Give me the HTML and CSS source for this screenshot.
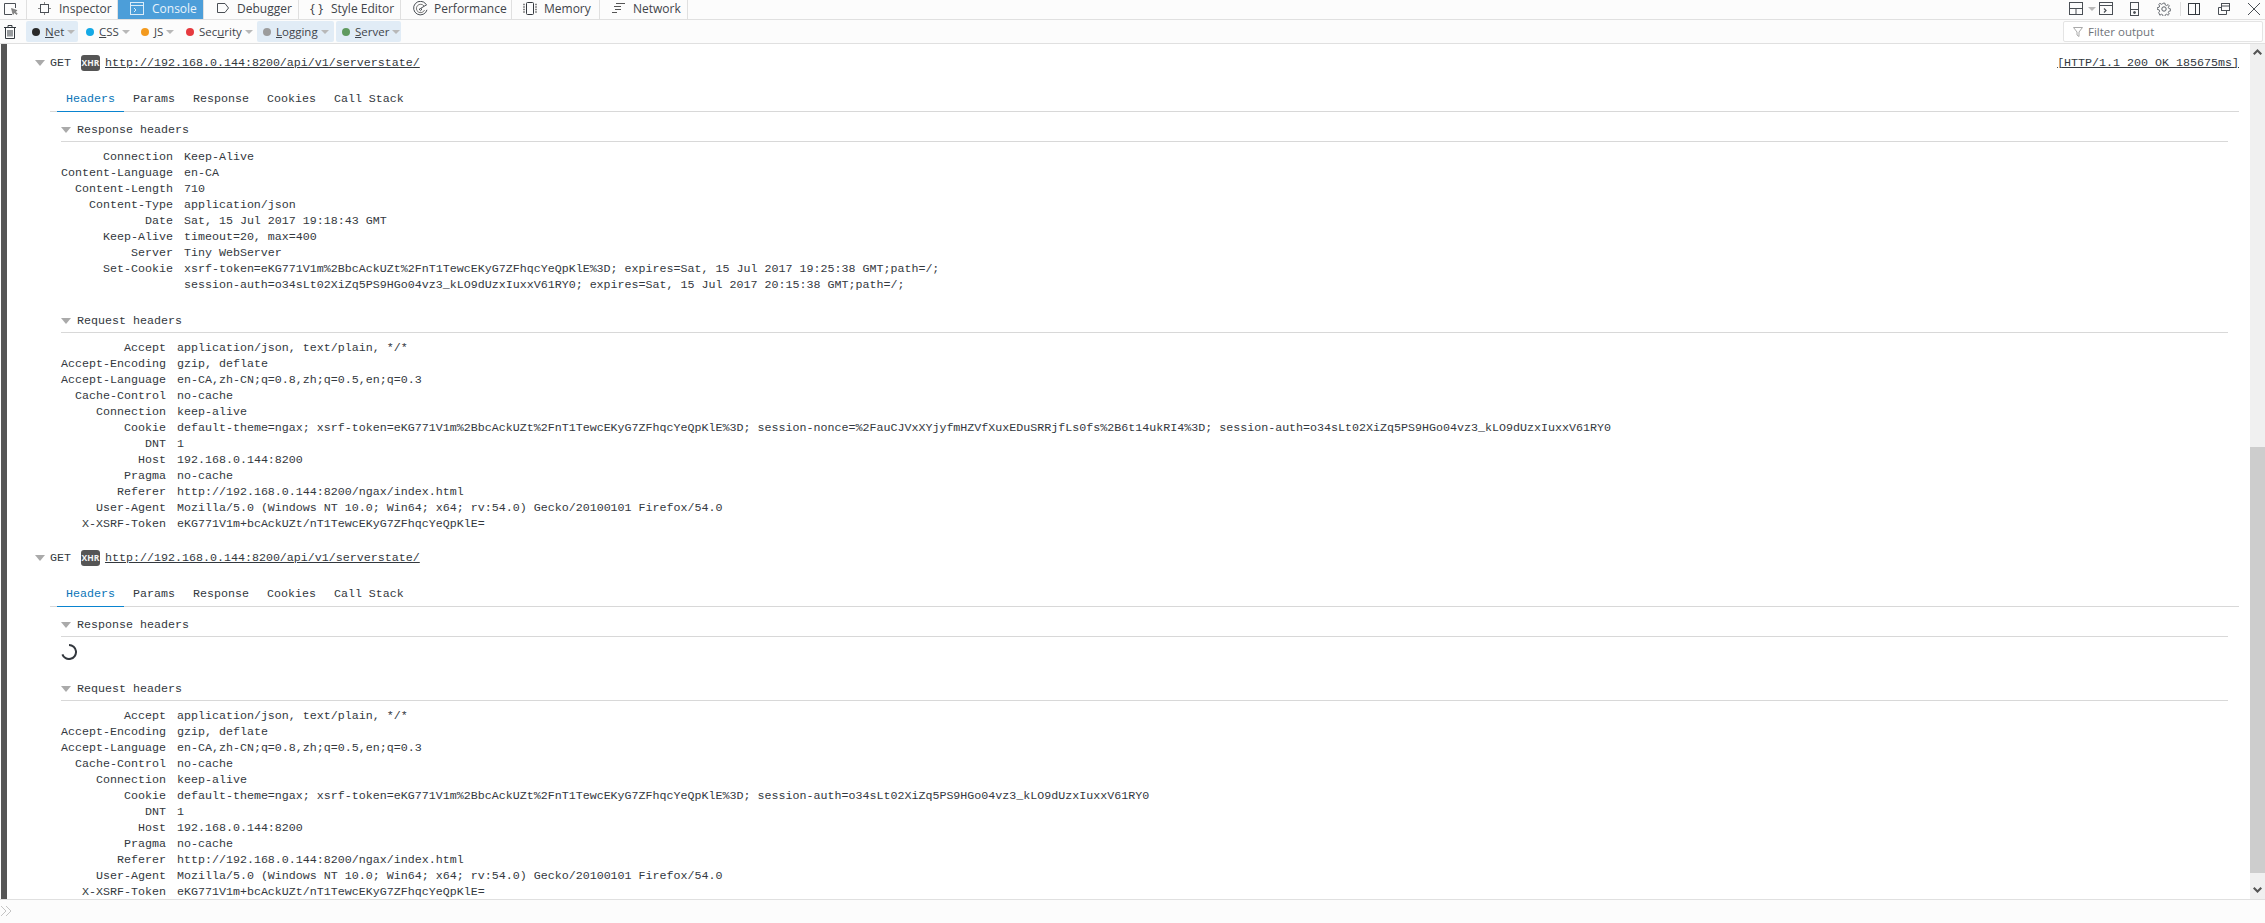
FILE: index.html
```html
<!DOCTYPE html>
<html lang="en">
<head>
<meta charset="utf-8">
<title>Web Console</title>
<link rel="stylesheet" href="styles.css">
</head>
<body>
<div class="devtools">
  <nav class="tabbar">
    <div class="picker">
      <svg width="16" height="14" viewBox="0 0 16 14" fill="none" stroke="#4a4f55"><path d="M9 12.5H1.5v-11h11V6"/><path d="M8.5 6.5l1.6 6 1.2-2 2.2 2 .8-.8-2.2-2 2-1.2z" fill="#888" stroke="#666" stroke-width=".6"/></svg>
    </div>
    <div class="tab t-inspector"><svg width="13" height="13" viewBox="0 0 13 13" fill="none" stroke="#4a4f55"><rect x="2.5" y="2.5" width="8" height="8"/><path d="M6.5 0v2M6.5 11v2M0 6.5h2M11 6.5h2" stroke="#888"/></svg><span>Inspector</span></div>
    <div class="tab t-console active"><svg width="14" height="13" viewBox="0 0 14 13" fill="none" stroke="#fff" stroke-opacity=".8"><rect x=".5" y=".5" width="13" height="12"/><path d="M1 3.5h12M4 6l2 2-2 2"/></svg><span>Console</span></div>
    <div class="tab t-debugger"><svg width="14" height="12" viewBox="0 0 14 12" fill="none" stroke="#4a4f55"><path d="M1.5 1.5h7.5l3.5 4.5-3.5 4.5H1.5z" stroke-linejoin="round"/></svg><span>Debugger</span></div>
    <div class="tab t-style"><span class="braces">{ }</span><span>Style Editor</span></div>
    <div class="tab t-perf"><svg width="15" height="15" viewBox="0 0 15 15" fill="none" stroke="#4a4f55"><path d="M13 3.2A6.8 6.8 0 1 0 14 8.800"/><path d="M11 5A4.200 4.200 0 1 0 11.500 9" stroke="#777"/><path d="M7.500 7.500L14 3.500M7.500 7.500a1 1 0 1 0 .1 0"/></svg><span>Performance</span></div>
    <div class="tab t-memory"><svg width="16" height="13" viewBox="0 0 16 13" fill="none" stroke="#33383e"><rect x="4.500" y=".5" width="7" height="12" rx="1"/><path d="M1 2.500h2M1 5h2M1 7.500h2M1 10h2M13 2.500h2M13 5h2M13 7.500h2M13 10h2" stroke="#888" stroke-width="1.500"/></svg><span>Memory</span></div>
    <div class="tab t-network"><svg width="13" height="12" viewBox="0 0 13 12" fill="none" stroke="#555"><path d="M4 1.500h9M2 4.500h7M3 7.500h6M0 10.500h5"/></svg><span>Network</span></div>
    <div class="tools">
      <span class="tool layout"><svg width="14" height="13" viewBox="0 0 14 13" fill="none" stroke="#4a4f55"><rect x=".5" y=".5" width="13" height="12"/><path d="M.5 6.500h13M7 6.500v6"/></svg><i class="caret"></i></span>
      <span class="tool t-a"><svg width="14" height="13" viewBox="0 0 14 13" fill="none" stroke="#4a4f55"><rect x=".5" y=".5" width="13" height="12"/><path d="M1 3.500h12M5 6.500l2 2-2 2" stroke-width="1.200"/></svg></span>
      <span class="tool t-b"><svg width="9" height="14" viewBox="0 0 9 14" fill="none" stroke="#4a4f55"><rect x=".5" y=".5" width="8" height="13"/><path d="M.5 7.500h8"/><circle cx="4.500" cy="10.500" r="1" fill="#4a4f55"/></svg></span>
      <span class="tool t-c"><svg width="14" height="14" viewBox="0 0 14 14" fill="none" stroke="#5a5f65"><circle cx="7" cy="7" r="2.200"/><path d="M6 .5h2l.4 2 1.500.7 1.700-1.100 1.300 1.400-1.100 1.600.7 1.500 2 .4v2l-2 .4-.7 1.500 1.100 1.700-1.400 1.300-1.600-1.100-1.500.7-.4 2H6l-.4-2-1.500-.7-1.700 1.100L1.100 11l1.100-1.600-.7-1.500-2-.4v-2l2-.4.7-1.500L1.100 2l1.400-1.300 1.600 1.100 1.500-.7z" transform="translate(.7 .7) scale(.9)"/></svg></span>
      <span class="tool-sep"></span>
      <span class="tool t-d"><svg width="12" height="12" viewBox="0 0 12 12" fill="none" stroke="#33383e"><rect x=".5" y=".5" width="11" height="11"/><path d="M7.500 .5v11"/></svg></span>
      <span class="tool t-e"><svg width="12" height="12" viewBox="0 0 12 12" fill="none" stroke="#4a4f55"><rect x="3.500" y=".5" width="8" height="7"/><path d="M3.500 3h8"/><path d="M3.500 4.500H.5v7h8V7.500" /></svg></span>
      <span class="tool t-f"><svg width="14" height="14" viewBox="0 0 14 14" fill="none" stroke="#4a4f55"><path d="M1 1l12 12M13 1L1 13"/></svg></span>
    </div>
  </nav>

  <div class="filterbar">
    <span class="trash"><svg width="12" height="14" viewBox="0 0 12 14" fill="none" stroke="#33383e"><path d="M0 2.500h12M4 2.500V.5h4v2"/><path d="M1.500 2.500v11h9v-11M4 5v6.500M6 5v6.500M8 5v6.500"/></svg></span>
    <span class="cat b-net on"><i class="dot d-net"></i><u>N</u>et<i class="caret"></i></span>
    <span class="cat b-css"><i class="dot d-css"></i><u>C</u>SS<i class="caret"></i></span>
    <span class="cat b-js"><i class="dot d-js"></i><u>J</u>S<i class="caret"></i></span>
    <span class="cat b-sec"><i class="dot d-sec"></i>Sec<u>u</u>rity<i class="caret"></i></span>
    <span class="cat b-log on"><i class="dot d-log"></i><u>L</u>ogging<i class="caret"></i></span>
    <span class="cat b-srv on"><i class="dot d-srv"></i><u>S</u>erver<i class="caret"></i></span>
    <label class="filter"><svg width="10" height="10" viewBox="0 0 10 10" fill="#fff" stroke="#aaa"><path d="M.5 .5h9L6 5v4.500L4 8V5z"/></svg><span>Filter output</span></label>
  </div>

  <div class="body">
    <main class="output">
      <article class="msg">
        <header class="msg-head">
          <i class="twisty"></i><span class="method">GET</span><span class="xhr">XHR</span><a class="url">http://192.168.0.144:8200/api/v1/serverstate/</a><a class="status">[HTTP/1.1 200 OK 185675ms]</a>
        </header>
        <ul class="net-tabs"><li class="sel">Headers</li><li>Params</li><li>Response</li><li>Cookies</li><li>Call Stack</li></ul>
        <h3 class="sec first"><i class="twisty small"></i>Response headers</h3>
        <dl class="hdrs">
          <dt>Connection</dt><dd>Keep-Alive</dd>
          <dt>Content-Language</dt><dd>en-CA</dd>
          <dt>Content-Length</dt><dd>710</dd>
          <dt>Content-Type</dt><dd>application/json</dd>
          <dt>Date</dt><dd>Sat, 15 Jul 2017 19:18:43 GMT</dd>
          <dt>Keep-Alive</dt><dd>timeout=20, max=400</dd>
          <dt>Server</dt><dd>Tiny WebServer</dd>
          <dt>Set-Cookie</dt><dd>xsrf-token=eKG771V1m%2BbcAckUZt%2FnT1TewcEKyG7ZFhqcYeQpKlE%3D; expires=Sat, 15 Jul 2017 19:25:38 GMT;path=/;<br>session-auth=o34sLt02XiZq5PS9HGo04vz3_kLO9dUzxIuxxV61RY0; expires=Sat, 15 Jul 2017 20:15:38 GMT;path=/;</dd>
        </dl>
        <h3 class="sec"><i class="twisty small"></i>Request headers</h3>
        <dl class="hdrs">
          <dt>Accept</dt><dd>application/json, text/plain, */*</dd>
          <dt>Accept-Encoding</dt><dd>gzip, deflate</dd>
          <dt>Accept-Language</dt><dd>en-CA,zh-CN;q=0.8,zh;q=0.5,en;q=0.3</dd>
          <dt>Cache-Control</dt><dd>no-cache</dd>
          <dt>Connection</dt><dd>keep-alive</dd>
          <dt>Cookie</dt><dd>default-theme=ngax; xsrf-token=eKG771V1m%2BbcAckUZt%2FnT1TewcEKyG7ZFhqcYeQpKlE%3D; session-nonce=%2FauCJVxXYjyfmHZVfXuxEDuSRRjfLs0fs%2B6t14ukRI4%3D; session-auth=o34sLt02XiZq5PS9HGo04vz3_kLO9dUzxIuxxV61RY0</dd>
          <dt>DNT</dt><dd>1</dd>
          <dt>Host</dt><dd>192.168.0.144:8200</dd>
          <dt>Pragma</dt><dd>no-cache</dd>
          <dt>Referer</dt><dd>http://192.168.0.144:8200/ngax/index.html</dd>
          <dt>User-Agent</dt><dd>Mozilla/5.0 (Windows NT 10.0; Win64; x64; rv:54.0) Gecko/20100101 Firefox/54.0</dd>
          <dt>X-XSRF-Token</dt><dd>eKG771V1m+bcAckUZt/nT1TewcEKyG7ZFhqcYeQpKlE=</dd>
        </dl>
      </article>
      <article class="msg second">
        <header class="msg-head">
          <i class="twisty"></i><span class="method">GET</span><span class="xhr">XHR</span><a class="url">http://192.168.0.144:8200/api/v1/serverstate/</a>
        </header>
        <ul class="net-tabs"><li class="sel">Headers</li><li>Params</li><li>Response</li><li>Cookies</li><li>Call Stack</li></ul>
        <h3 class="sec first"><i class="twisty small"></i>Response headers</h3>
        <div class="spinner"><svg width="16" height="16" viewBox="0 0 16 16" fill="none" stroke="#33383e" stroke-width="2"><path d="M8 1a7 7 0 1 1-6.600 9.300"/></svg></div>
        <h3 class="sec after-spin"><i class="twisty small"></i>Request headers</h3>
        <dl class="hdrs">
          <dt>Accept</dt><dd>application/json, text/plain, */*</dd>
          <dt>Accept-Encoding</dt><dd>gzip, deflate</dd>
          <dt>Accept-Language</dt><dd>en-CA,zh-CN;q=0.8,zh;q=0.5,en;q=0.3</dd>
          <dt>Cache-Control</dt><dd>no-cache</dd>
          <dt>Connection</dt><dd>keep-alive</dd>
          <dt>Cookie</dt><dd>default-theme=ngax; xsrf-token=eKG771V1m%2BbcAckUZt%2FnT1TewcEKyG7ZFhqcYeQpKlE%3D; session-auth=o34sLt02XiZq5PS9HGo04vz3_kLO9dUzxIuxxV61RY0</dd>
          <dt>DNT</dt><dd>1</dd>
          <dt>Host</dt><dd>192.168.0.144:8200</dd>
          <dt>Pragma</dt><dd>no-cache</dd>
          <dt>Referer</dt><dd>http://192.168.0.144:8200/ngax/index.html</dd>
          <dt>User-Agent</dt><dd>Mozilla/5.0 (Windows NT 10.0; Win64; x64; rv:54.0) Gecko/20100101 Firefox/54.0</dd>
          <dt>X-XSRF-Token</dt><dd>eKG771V1m+bcAckUZt/nT1TewcEKyG7ZFhqcYeQpKlE=</dd>
        </dl>
      </article>
    </main>
    <aside class="scrollbar">
      <div class="sb-up"><svg width="9" height="6" viewBox="0 0 9 6" fill="#555"><path d="M4.500 0L9 4.500 7.500 6 4.500 3 1.500 6 0 4.500z"/></svg></div>
      <div class="sb-thumb"></div>
      <div class="sb-down"><svg width="9" height="6" viewBox="0 0 9 6" fill="#555"><path d="M4.500 6L9 1.500 7.500 0 4.500 3 1.500 0 0 1.500z"/></svg></div>
    </aside>
  </div>

  <footer class="input"><svg width="14" height="12" viewBox="0 0 14 12" fill="none" stroke="#c4c4c4"><path d="M1 1l5 5-5 5M6 1l5 5-5 5"/></svg></footer>
</div>
</body>
</html>
```
FILE: styles.css
```css
* { box-sizing: border-box; }
html, body { margin: 0; height: 100%; overflow: hidden; background: #fcfcfc; }
body { font-family: "Open Sans", "Noto Sans", sans-serif; font-size: 11.5px; color: #33383e; }
.devtools { height: 923px; display: flex; flex-direction: column; }

/* main tab bar */
.tabbar { height: 20px; flex: none; display: flex; background: #fcfcfc; border-bottom: 1px solid #e0e0e0; }
.picker { width: 27px; display: flex; align-items: center; padding: 0 0 2px 3px; border-right: 1px solid #e0e0e0; }
.tab { display: flex; align-items: center; border-right: 1px solid #e0e0e0; font-size: 12px; color: #3f444a; padding-bottom: 3px; }
.tab.active { background: #4c9ed9; color: #e8f3fb; }
.t-inspector { width: 91px; padding-left: 11px; gap: 8px; }
.t-console { width: 86px; padding-left: 12px; gap: 8px; }
.t-debugger { width: 95px; padding-left: 12px; gap: 7px; }
.t-style { width: 102px; padding-left: 11px; gap: 8px; }
.t-perf { width: 111px; padding-left: 12px; gap: 6px; }
.t-memory { width: 88px; padding-left: 10px; gap: 6px; }
.t-network { width: 88px; padding-left: 12px; gap: 8px; }
.braces { font-size: 13px; width: 13px; white-space: nowrap; }
.tools { margin-left: auto; display: flex; align-items: center; padding-bottom: 2px; }
.tool { display: flex; align-items: center; }
.layout { width: 30px; gap: 2px; }
.t-a { width: 31px; }
.t-b { width: 27px; }
.t-c { width: 23px; }
.tool-sep { width: 1px; height: 14px; background: #e0e0e0; margin-right: 7px; }
.t-d { width: 30px; }
.t-e { width: 29px; }
.t-f { width: 18px; }

/* filter bar */
.filterbar { height: 24px; flex: none; display: flex; align-items: center; background: #fcfcfc; border-bottom: 1px solid #e0e0e0; position: relative; }
.trash { width: 26px; padding-left: 4px; display: flex; }
.cat { height: 21px; display: flex; align-items: center; border-radius: 2px; padding: 0 4px 0 6px; color: #3f444a; white-space: nowrap; }
.cat.on { background: #e1ecf6; }
.cat u { text-decoration: underline; }
.dot { width: 8px; height: 8px; border-radius: 50%; margin-right: 5px; flex: none; }
.d-net { background: #2a2a2a; }
.d-css { background: #14a9e6; }
.d-js { background: #f39a1f; }
.d-sec { background: #e63a3f; }
.d-log { background: #9c9c9c; }
.d-srv { background: #5f9a5f; }
.caret { width: 0; height: 0; border: 4px solid transparent; border-top: 4px solid #b8b8b8; border-bottom: 0; margin-left: 3px; }
.b-net { width: 52px; }
.b-css { width: 55px; margin-left: 2px; }
.b-js { width: 45px; }
.b-sec { width: 72px; }
.b-log { width: 77px; margin-left: 5px; }
.b-srv { width: 65px; margin-left: 2px; }
.filter { margin-left: auto; margin-right: 2px; width: 200px; height: 21px; background: #fff; border: 1px solid #e4e4e4; border-radius: 2px; display: flex; align-items: center; gap: 5px; padding-left: 9px; color: #6f7479; }

/* output */
.body { flex: 1; min-height: 0; display: flex; }
.output { flex: 1; min-width: 0; overflow: hidden; background: #fff; margin-left: 1px; border-left: 6px solid #555; padding: 10px 11px 0 28px; font-family: "Liberation Mono", monospace; font-size: 11.67px; line-height: 16px; color: #33383e; }
.msg.second { margin-top: 17px; }
.msg-head { display: flex; align-items: center; height: 17px; white-space: nowrap; }
.twisty { display: block; flex: none; width: 0; height: 0; border: 5px solid transparent; border-top: 6px solid #aaa; border-bottom: 0; }
.twisty.small { margin-right: 6px; }
.method { margin-left: 5px; width: 31px; }
.xhr { width: 19px; height: 16px; flex: none; border-radius: 3px; background: #555; color: #f4f4f4; font-family: "Open Sans", sans-serif; font-weight: 700; font-size: 8.5px; line-height: 16px; text-align: center; margin-right: 5px; }
.url { text-decoration: underline; color: #33383e; }
.status { margin-left: auto; text-decoration: underline; }

.net-tabs { list-style: none; margin: 20px 0 0 15px; padding: 0 0 0 7px; display: flex; height: 21px; border-bottom: 1px solid #d8d8d8; line-height: 16px; }
.net-tabs li { padding: 0 9px; height: 21px; flex: none; }
.net-tabs li.sel { color: #0a75b8; border-bottom: 1px solid #0a84d0; }

.sec { margin: 20px 11px 0 26px; padding-bottom: 3px; height: 20px; font: inherit; display: flex; align-items: center; border-bottom: 1px solid #d8d8d8; }
.sec.first { margin-top: 10px; }
.sec.after-spin { margin-top: 21px; }
.hdrs { margin: 7px 0 0 26px; display: grid; grid-template-columns: max-content 1fr; column-gap: 11px; white-space: nowrap; }
.hdrs dt { text-align: right; }
.hdrs dd { margin: 0; }
.spinner { margin: 7px 0 0 26px; height: 16px; display: flex; }

/* scrollbar */
.scrollbar { width: 15px; flex: none; background: #f0f0f0; display: flex; flex-direction: column; }
.sb-up { height: 403px; padding: 5px 0 0 3px; display: flex; align-items: flex-start; }
.sb-thumb { height: 426px; background: #cdcdcd; }
.sb-down { flex: 1; display: flex; align-items: flex-end; padding: 0 0 6px 3px; }

.input { height: 24px; flex: none; background: #fcfcfc; border-top: 1px solid #e0e0e0; display: flex; align-items: center; padding: 0 0 1px 0; }
```
